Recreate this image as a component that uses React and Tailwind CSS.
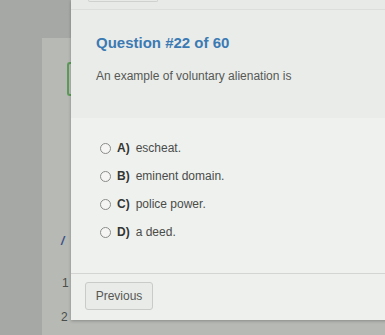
const options = [
  { key: 'A)', text: 'escheat.' },
  { key: 'B)', text: 'eminent domain.' },
  { key: 'C)', text: 'police power.' },
  { key: 'D)', text: 'a deed.' },
];

export default function App() {
  return (
    <div
      className="relative w-[385px] h-[335px] overflow-hidden bg-[#a5a8a4]"
      style={{ fontFamily: '"Liberation Sans", Arial, sans-serif' }}
    >
      {/* page behind the modal */}
      <div className="ml-[42px] mt-[38px] h-[297px] bg-[#b6b9b4] relative">
        <div className="absolute left-[25px] top-[24px] w-[8px] h-[34px] border-2 border-r-0 border-[#5d9a58] rounded-l-[3px]" />
        <span className="absolute left-[19px] top-[194px] text-[12px] font-bold italic text-[#3b4f86]">/</span>
        <span className="absolute left-[20px] top-[236px] text-[12px] text-[#4a4d4a]">1</span>
        <span className="absolute left-[19px] top-[270px] text-[12px] text-[#4a4d4a]">2</span>
      </div>

      {/* modal */}
      <div className="absolute left-[71px] top-0 w-[320px] h-[320px] flex flex-col bg-[#eceeeb] shadow-[0_1px_3px_rgba(0,0,0,0.25)]">
        <div className="h-[10px] border-b border-[#dcdedb] bg-[#e8eae7] relative">
          <div className="absolute left-[17px] top-0 w-[70px] h-[2px] border border-t-0 border-[#cfd1ce] rounded-b-[2px]" />
        </div>
        <div className="h-[108px] bg-[#eaece9] pl-[25px] pt-[24px]">
          <h2 className="text-[15px] font-bold text-[#3b7ab3] leading-[18px]">Question #22 of 60</h2>
          <p className="mt-[17px] text-[12px] leading-[14px] text-[#555855]">An example of voluntary alienation is</p>
        </div>
        <div className="h-[156px] bg-[#eff1ee] pl-[29px] pt-[23px] flex flex-col gap-[14px] border-b border-[#d3d5d2]">
          {options.map((o) => (
            <div key={o.key} className="flex items-center h-[14px] text-[12px]">
              <span className="w-[11px] h-[11px] rounded-full border border-[#8a8c8a] bg-[#f5f6f4]" />
              <span className="ml-[6px] font-bold text-[#333533]">{o.key}</span>
              <span className="ml-[6px] text-[#4a4c4a]">{o.text}</span>
            </div>
          ))}
        </div>
        <div className="flex-1 bg-[#eef0ed] pl-[14px] pt-[8px]">
          <button className="w-[68px] h-[28px] rounded-[3px] border border-[#c9cbc8] bg-[#e9ebe8] text-[12px] text-[#555755]">
            Previous
          </button>
        </div>
      </div>
    </div>
  );
}
